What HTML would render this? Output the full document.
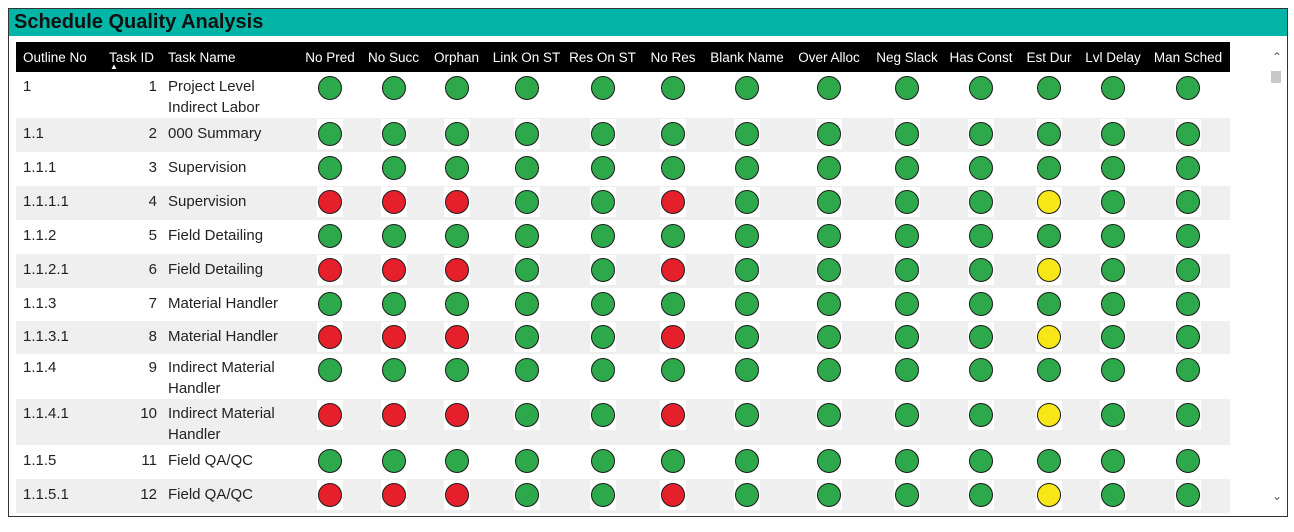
<!DOCTYPE html>
<html><head><meta charset="utf-8"><style>
*{box-sizing:border-box;margin:0;padding:0}
body{width:1294px;height:532px;background:#fff;font-family:"Liberation Sans",sans-serif;overflow:hidden;position:relative}
#box{position:absolute;left:8px;top:8px;width:1280px;height:509px;border:1px solid #333;overflow:hidden}
#title{position:absolute;left:0;top:0;width:1278px;height:27px;background:#02b5a6;font-weight:bold;font-size:20px;color:#111;padding:2px 0 0 5px}
table{position:absolute;left:7px;top:33px;border-collapse:collapse;table-layout:fixed;width:1214px;font-size:15px;color:#222}
th{background:#000;color:#fff;font-weight:normal;height:30px;font-size:13.5px;text-align:center;white-space:nowrap;position:relative;padding:0}
td{vertical-align:top;padding-top:5px;line-height:21px;white-space:nowrap}
tr.t td{padding-top:4px}
tr.t3 td{padding-top:3px}
tr.g td{background:#efefef}
.o{padding-left:7px;text-align:left}
.i{text-align:right;padding-right:3px}
.n{padding-left:8px;text-align:left}
tr td.c{padding-top:1px;line-height:0;font-size:0}
.s{display:block;margin:0 auto;width:26px;height:30px;background:#fff;padding-top:3px}
.d{display:block;margin:0 auto;width:24px;height:24px;border-radius:50%;border:1.5px solid #1a1a1a;background:#2da84a}
.r{background:#e6202b}.y{background:#f7e718}
#sb{position:absolute;left:1261px;top:33px;width:14px;height:470px}
</style></head><body>
<div id="box">
<div id="title">Schedule Quality Analysis</div>
<table>
<colgroup><col style="width:84px"><col style="width:60px"><col style="width:138px"><col style="width:64px"><col style="width:63px"><col style="width:63px"><col style="width:77px"><col style="width:75px"><col style="width:66px"><col style="width:82px"><col style="width:82px"><col style="width:74px"><col style="width:74px"><col style="width:62px"><col style="width:66px"><col style="width:84px"></colgroup>
<tr style="height:30px"><th class="o">Outline No</th><th class="i" style="text-align:left;padding-left:9px">Task ID<span style="position:absolute;left:10px;top:20px;font-size:8px">▲</span></th><th class="n">Task Name</th><th>No Pred</th><th>No Succ</th><th>Orphan</th><th>Link On ST</th><th>Res On ST</th><th>No Res</th><th>Blank Name</th><th>Over Alloc</th><th>Neg Slack</th><th>Has Const</th><th>Est Dur</th><th>Lvl Delay</th><th>Man Sched</th></tr>
<tr class="t" style="height:46px"><td class="o">1</td><td class="i">1</td><td class="n">Project Level<br>Indirect Labor</td><td class="c"><span class="s"><span class="d"></span></span></td><td class="c"><span class="s"><span class="d"></span></span></td><td class="c"><span class="s"><span class="d"></span></span></td><td class="c"><span class="s"><span class="d"></span></span></td><td class="c"><span class="s"><span class="d"></span></span></td><td class="c"><span class="s"><span class="d"></span></span></td><td class="c"><span class="s"><span class="d"></span></span></td><td class="c"><span class="s"><span class="d"></span></span></td><td class="c"><span class="s"><span class="d"></span></span></td><td class="c"><span class="s"><span class="d"></span></span></td><td class="c"><span class="s"><span class="d"></span></span></td><td class="c"><span class="s"><span class="d"></span></span></td><td class="c"><span class="s"><span class="d"></span></span></td></tr>
<tr class="g" style="height:34px"><td class="o">1.1</td><td class="i">2</td><td class="n">000 Summary</td><td class="c"><span class="s"><span class="d"></span></span></td><td class="c"><span class="s"><span class="d"></span></span></td><td class="c"><span class="s"><span class="d"></span></span></td><td class="c"><span class="s"><span class="d"></span></span></td><td class="c"><span class="s"><span class="d"></span></span></td><td class="c"><span class="s"><span class="d"></span></span></td><td class="c"><span class="s"><span class="d"></span></span></td><td class="c"><span class="s"><span class="d"></span></span></td><td class="c"><span class="s"><span class="d"></span></span></td><td class="c"><span class="s"><span class="d"></span></span></td><td class="c"><span class="s"><span class="d"></span></span></td><td class="c"><span class="s"><span class="d"></span></span></td><td class="c"><span class="s"><span class="d"></span></span></td></tr>
<tr style="height:34px"><td class="o">1.1.1</td><td class="i">3</td><td class="n">Supervision</td><td class="c"><span class="s"><span class="d"></span></span></td><td class="c"><span class="s"><span class="d"></span></span></td><td class="c"><span class="s"><span class="d"></span></span></td><td class="c"><span class="s"><span class="d"></span></span></td><td class="c"><span class="s"><span class="d"></span></span></td><td class="c"><span class="s"><span class="d"></span></span></td><td class="c"><span class="s"><span class="d"></span></span></td><td class="c"><span class="s"><span class="d"></span></span></td><td class="c"><span class="s"><span class="d"></span></span></td><td class="c"><span class="s"><span class="d"></span></span></td><td class="c"><span class="s"><span class="d"></span></span></td><td class="c"><span class="s"><span class="d"></span></span></td><td class="c"><span class="s"><span class="d"></span></span></td></tr>
<tr class="g" style="height:34px"><td class="o">1.1.1.1</td><td class="i">4</td><td class="n">Supervision</td><td class="c"><span class="s"><span class="d r"></span></span></td><td class="c"><span class="s"><span class="d r"></span></span></td><td class="c"><span class="s"><span class="d r"></span></span></td><td class="c"><span class="s"><span class="d"></span></span></td><td class="c"><span class="s"><span class="d"></span></span></td><td class="c"><span class="s"><span class="d r"></span></span></td><td class="c"><span class="s"><span class="d"></span></span></td><td class="c"><span class="s"><span class="d"></span></span></td><td class="c"><span class="s"><span class="d"></span></span></td><td class="c"><span class="s"><span class="d"></span></span></td><td class="c"><span class="s"><span class="d y"></span></span></td><td class="c"><span class="s"><span class="d"></span></span></td><td class="c"><span class="s"><span class="d"></span></span></td></tr>
<tr style="height:34px"><td class="o">1.1.2</td><td class="i">5</td><td class="n">Field Detailing</td><td class="c"><span class="s"><span class="d"></span></span></td><td class="c"><span class="s"><span class="d"></span></span></td><td class="c"><span class="s"><span class="d"></span></span></td><td class="c"><span class="s"><span class="d"></span></span></td><td class="c"><span class="s"><span class="d"></span></span></td><td class="c"><span class="s"><span class="d"></span></span></td><td class="c"><span class="s"><span class="d"></span></span></td><td class="c"><span class="s"><span class="d"></span></span></td><td class="c"><span class="s"><span class="d"></span></span></td><td class="c"><span class="s"><span class="d"></span></span></td><td class="c"><span class="s"><span class="d"></span></span></td><td class="c"><span class="s"><span class="d"></span></span></td><td class="c"><span class="s"><span class="d"></span></span></td></tr>
<tr class="g" style="height:34px"><td class="o">1.1.2.1</td><td class="i">6</td><td class="n">Field Detailing</td><td class="c"><span class="s"><span class="d r"></span></span></td><td class="c"><span class="s"><span class="d r"></span></span></td><td class="c"><span class="s"><span class="d r"></span></span></td><td class="c"><span class="s"><span class="d"></span></span></td><td class="c"><span class="s"><span class="d"></span></span></td><td class="c"><span class="s"><span class="d r"></span></span></td><td class="c"><span class="s"><span class="d"></span></span></td><td class="c"><span class="s"><span class="d"></span></span></td><td class="c"><span class="s"><span class="d"></span></span></td><td class="c"><span class="s"><span class="d"></span></span></td><td class="c"><span class="s"><span class="d y"></span></span></td><td class="c"><span class="s"><span class="d"></span></span></td><td class="c"><span class="s"><span class="d"></span></span></td></tr>
<tr style="height:33px"><td class="o">1.1.3</td><td class="i">7</td><td class="n">Material Handler</td><td class="c"><span class="s"><span class="d"></span></span></td><td class="c"><span class="s"><span class="d"></span></span></td><td class="c"><span class="s"><span class="d"></span></span></td><td class="c"><span class="s"><span class="d"></span></span></td><td class="c"><span class="s"><span class="d"></span></span></td><td class="c"><span class="s"><span class="d"></span></span></td><td class="c"><span class="s"><span class="d"></span></span></td><td class="c"><span class="s"><span class="d"></span></span></td><td class="c"><span class="s"><span class="d"></span></span></td><td class="c"><span class="s"><span class="d"></span></span></td><td class="c"><span class="s"><span class="d"></span></span></td><td class="c"><span class="s"><span class="d"></span></span></td><td class="c"><span class="s"><span class="d"></span></span></td></tr>
<tr class="g" style="height:33px"><td class="o">1.1.3.1</td><td class="i">8</td><td class="n">Material Handler</td><td class="c"><span class="s"><span class="d r"></span></span></td><td class="c"><span class="s"><span class="d r"></span></span></td><td class="c"><span class="s"><span class="d r"></span></span></td><td class="c"><span class="s"><span class="d"></span></span></td><td class="c"><span class="s"><span class="d"></span></span></td><td class="c"><span class="s"><span class="d r"></span></span></td><td class="c"><span class="s"><span class="d"></span></span></td><td class="c"><span class="s"><span class="d"></span></span></td><td class="c"><span class="s"><span class="d"></span></span></td><td class="c"><span class="s"><span class="d"></span></span></td><td class="c"><span class="s"><span class="d y"></span></span></td><td class="c"><span class="s"><span class="d"></span></span></td><td class="c"><span class="s"><span class="d"></span></span></td></tr>
<tr class="t3" style="height:45px"><td class="o">1.1.4</td><td class="i">9</td><td class="n">Indirect Material<br>Handler</td><td class="c"><span class="s"><span class="d"></span></span></td><td class="c"><span class="s"><span class="d"></span></span></td><td class="c"><span class="s"><span class="d"></span></span></td><td class="c"><span class="s"><span class="d"></span></span></td><td class="c"><span class="s"><span class="d"></span></span></td><td class="c"><span class="s"><span class="d"></span></span></td><td class="c"><span class="s"><span class="d"></span></span></td><td class="c"><span class="s"><span class="d"></span></span></td><td class="c"><span class="s"><span class="d"></span></span></td><td class="c"><span class="s"><span class="d"></span></span></td><td class="c"><span class="s"><span class="d"></span></span></td><td class="c"><span class="s"><span class="d"></span></span></td><td class="c"><span class="s"><span class="d"></span></span></td></tr>
<tr class="g t" style="height:46px"><td class="o">1.1.4.1</td><td class="i">10</td><td class="n">Indirect Material<br>Handler</td><td class="c"><span class="s"><span class="d r"></span></span></td><td class="c"><span class="s"><span class="d r"></span></span></td><td class="c"><span class="s"><span class="d r"></span></span></td><td class="c"><span class="s"><span class="d"></span></span></td><td class="c"><span class="s"><span class="d"></span></span></td><td class="c"><span class="s"><span class="d r"></span></span></td><td class="c"><span class="s"><span class="d"></span></span></td><td class="c"><span class="s"><span class="d"></span></span></td><td class="c"><span class="s"><span class="d"></span></span></td><td class="c"><span class="s"><span class="d"></span></span></td><td class="c"><span class="s"><span class="d y"></span></span></td><td class="c"><span class="s"><span class="d"></span></span></td><td class="c"><span class="s"><span class="d"></span></span></td></tr>
<tr style="height:34px"><td class="o">1.1.5</td><td class="i">11</td><td class="n">Field QA/QC</td><td class="c"><span class="s"><span class="d"></span></span></td><td class="c"><span class="s"><span class="d"></span></span></td><td class="c"><span class="s"><span class="d"></span></span></td><td class="c"><span class="s"><span class="d"></span></span></td><td class="c"><span class="s"><span class="d"></span></span></td><td class="c"><span class="s"><span class="d"></span></span></td><td class="c"><span class="s"><span class="d"></span></span></td><td class="c"><span class="s"><span class="d"></span></span></td><td class="c"><span class="s"><span class="d"></span></span></td><td class="c"><span class="s"><span class="d"></span></span></td><td class="c"><span class="s"><span class="d"></span></span></td><td class="c"><span class="s"><span class="d"></span></span></td><td class="c"><span class="s"><span class="d"></span></span></td></tr>
<tr class="g" style="height:34px"><td class="o">1.1.5.1</td><td class="i">12</td><td class="n">Field QA/QC</td><td class="c"><span class="s"><span class="d r"></span></span></td><td class="c"><span class="s"><span class="d r"></span></span></td><td class="c"><span class="s"><span class="d r"></span></span></td><td class="c"><span class="s"><span class="d"></span></span></td><td class="c"><span class="s"><span class="d"></span></span></td><td class="c"><span class="s"><span class="d r"></span></span></td><td class="c"><span class="s"><span class="d"></span></span></td><td class="c"><span class="s"><span class="d"></span></span></td><td class="c"><span class="s"><span class="d"></span></span></td><td class="c"><span class="s"><span class="d"></span></span></td><td class="c"><span class="s"><span class="d y"></span></span></td><td class="c"><span class="s"><span class="d"></span></span></td><td class="c"><span class="s"><span class="d"></span></span></td></tr>
</table>
<div id="sb">
<div style="position:absolute;left:2px;top:8px;font-size:12px;color:#555">&#8963;</div>
<div style="position:absolute;left:1px;top:29px;width:10px;height:12px;background:#c8c8c8"></div>
<div style="position:absolute;left:2px;top:447px;font-size:12px;color:#555">&#8964;</div>
</div>
</div>
</body></html>
